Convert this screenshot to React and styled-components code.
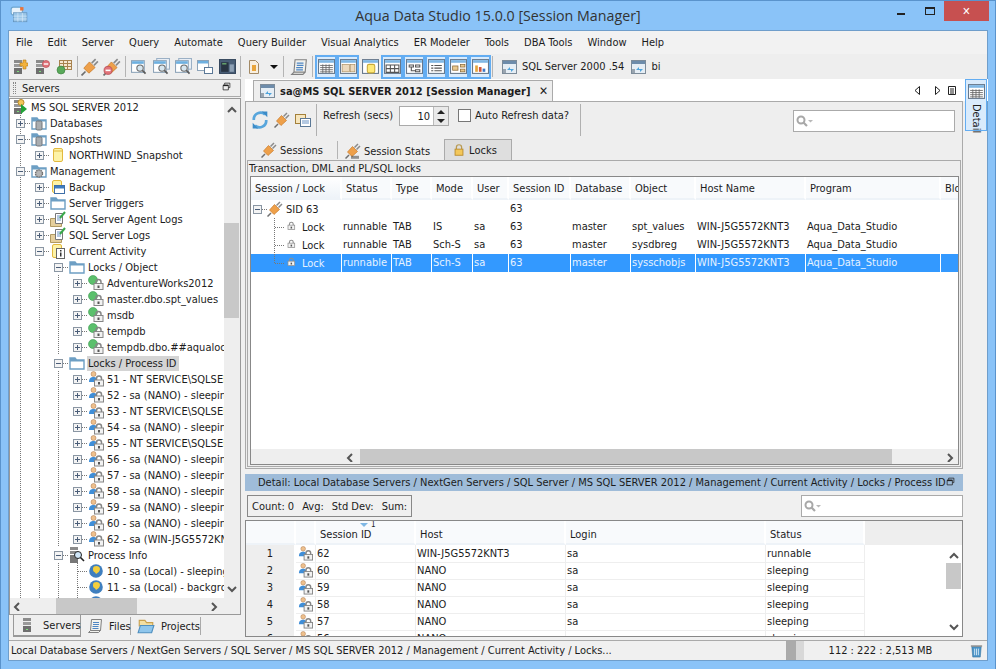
import React from "react";
import styled, { createGlobalStyle } from "styled-components";

const GlobalStyle = createGlobalStyle`
  html, body { margin: 0; padding: 0; background: #8ac3f8; }
  body { font-family: "DejaVu Sans Condensed", "Liberation Sans", sans-serif; font-size: 11px; color: #1c1c1c; }
  * { box-sizing: border-box; }
`;

/* ---------- icons ---------- */

const Svg = ({ size = 16, children }) => (
  <svg width={size} height={size} viewBox="0 0 16 16" style={{ display: "block", flex: "none" }}>
    {children}
  </svg>
);

const ServerBase = () => (
  <>
    <rect x="2" y="1" width="8" height="3" fill="#8b8b8b" />
    <rect x="2" y="5" width="8" height="3" fill="#9a9a9a" />
    <rect x="2" y="9" width="8" height="6" fill="#6f6f6f" />
    <rect x="5" y="12" width="2" height="1" fill="#7ee07e" />
  </>
);

const ServerAdd = () => (
  <Svg>
    <ServerBase />
    <path d="M11 1v3H8v3h3v3h3V7h2V4h-2V1z" fill="#f3b23c" stroke="#b77a16" strokeWidth=".6" />
  </Svg>
);

const ServerRemove = () => (
  <Svg>
    <ServerBase />
    <circle cx="12" cy="5" r="3.6" fill="#e0737a" stroke="#b0444a" strokeWidth=".6" />
    <rect x="9.8" y="4.3" width="4.4" height="1.4" fill="#fff" />
  </Svg>
);

const GridGreen = () => (
  <Svg>
    <rect x="3.5" y="1.5" width="12" height="9" fill="#f6e7cf" stroke="#a8824e" />
    <path d="M3.5 4.5h12M3.5 7.5h12M7.5 1.5v9M11.5 1.5v9" stroke="#a8824e" />
    <circle cx="5" cy="11" r="4" fill="#59a95a" stroke="#3a7d3c" strokeWidth=".6" />
  </Svg>
);

const Plug = ({ badge, size = 18 }) => (
  <Svg size={size}>
    <path d="M0.500 15.500L4 12" stroke="#6f6f6f" strokeWidth="1.500" />
    <path d="M2.500 9L7.500 3.500 12.500 8.500 7 13.500z" fill="#eea04a" stroke="#c97a28" strokeWidth=".7" />
    <path d="M9.500 4.500L13 1M11.500 6.500L15 3" stroke="#8a8a8a" strokeWidth="1.500" />
    {badge === "remove" && (
      <>
        <circle cx="4.500" cy="11" r="3.600" fill="#e0737a" stroke="#b0444a" strokeWidth=".6" />
        <rect x="2.300" y="10.300" width="4.400" height="1.400" fill="#fff" />
      </>
    )}
    {badge === "stats" && <path d="M7 15.800v-3M9 15.800v-3M11 15.800v-3M13 15.800v-3" stroke="#333" strokeWidth="1" />}
  </Svg>
);

const WinSearch = ({ second }) => (
  <Svg size={17}>
    {second && <rect x="3.500" y="0.500" width="12" height="10" fill="#eef3f8" stroke="#9bb0c5" />}
    <rect x="0.500" y="2.500" width="12" height="11" fill="#fff" stroke="#8da3b8" />
    <rect x="1" y="3" width="11" height="2.500" fill="#6eb0e0" />
    <circle cx="8.500" cy="9.500" r="3" fill="#d7e6ef" stroke="#6b6b6b" />
    <path d="M10.700 11.700l3 3" stroke="#5a5a5a" strokeWidth="1.600" />
  </Svg>
);

const WinStack = () => (
  <Svg>
    <rect x="0.500" y="1.500" width="11" height="10" fill="#fff" stroke="#8da3b8" />
    <rect x="1" y="2" width="10" height="2.500" fill="#6eb0e0" />
    <rect x="7.500" y="8.500" width="8" height="6" fill="#fff" stroke="#5b7896" />
  </Svg>
);

const DarkPanel = () => (
  <Svg size={17}>
    <rect x="0.500" y="1.500" width="15" height="13" fill="#4a5f78" stroke="#34465c" />
    <rect x="2" y="4" width="7" height="9" fill="#283442" />
    <rect x="3" y="5" width="4" height="1" fill="#7fd07f" />
    <rect x="10" y="6" width="4" height="7" fill="#8da0b4" />
  </Svg>
);

const Doc = () => (
  <Svg>
    <path d="M3.500 1.500h6l3 3v10h-9z" fill="#f8efe0" stroke="#a38a66" />
    <rect x="6" y="6" width="4" height="6" fill="#e9a53c" />
  </Svg>
);

const Scroll = ({ size = 16 }) => (
  <Svg size={size}>
    <path d="M4.500 1.500h10l-1 11h-10zM3.500 12.500l-2 2h10l2-2" fill="#f2f2ee" stroke="#808080" />
    <path d="M6 4.500h6M6 6.500h6M5.500 8.500h6M5.500 10.500h6" stroke="#4e86c4" />
  </Svg>
);

const ViewWin = ({ kind }) => (
  <Svg size={17}>
    <rect x="0.500" y="1.500" width="15" height="13" fill="#fff" stroke="#66788c" />
    <rect x="1" y="2" width="14" height="2.500" fill="#7fb7e4" />
    {kind === "grid" && (
      <path d="M2 7h12M2 9h12M2 11h12M2 13h12M4.500 6v8M7.500 6v8M10.500 6v8" stroke="#666" strokeWidth=".8" />
    )}
    {kind === "panel" && (
      <>
        <rect x="2" y="6" width="7" height="7" fill="#ecd9bd" stroke="#a88a5c" strokeWidth=".6" />
        <rect x="10" y="6" width="4" height="7" fill="#ecd9bd" stroke="#a88a5c" strokeWidth=".6" />
      </>
    )}
    {kind === "db" && <rect x="5" y="6" width="7" height="8" rx="1.500" fill="#ffe978" stroke="#c8a93a" />}
    {kind === "table" && <path d="M2 6.500h12v7H2zM2 10h12M6 6.500v7M10 6.500v7" fill="none" stroke="#555" />}
    {kind === "flow" && (
      <path d="M3 6.500h4v2H3zM9 6.500h4v2H9zM9 11h4v2H9zM5 8.500V12h4" fill="none" stroke="#555" />
    )}
    {kind === "list" && <path d="M3 7h2M6 7h7M3 9.500h2M6 9.500h7M3 12h2M6 12h7" stroke="#555" />}
    {kind === "tree" && (
      <>
        <rect x="2.500" y="7.500" width="5" height="4" fill="#e9c98f" stroke="#8a6a3a" strokeWidth=".7" />
        <rect x="10" y="6" width="4" height="2.500" fill="#e9c98f" stroke="#8a6a3a" strokeWidth=".7" />
        <rect x="10" y="10.500" width="4" height="2.500" fill="#e9c98f" stroke="#8a6a3a" strokeWidth=".7" />
      </>
    )}
    {kind === "bars" && (
      <>
        <rect x="3" y="7" width="2.500" height="6" fill="#e5a53c" />
        <rect x="6.500" y="8.500" width="2.500" height="4.500" fill="#d0563c" />
        <rect x="10" y="10" width="2.500" height="3" fill="#3c78c8" />
      </>
    )}
  </Svg>
);

const Connection = () => (
  <Svg>
    <rect x="0.500" y="1.500" width="14" height="13" fill="#e6eef5" stroke="#7d8c9a" />
    <rect x="1" y="2" width="13" height="3" fill="#6d8cab" />
    <path d="M5 11l3-3v2h4l-3 3v-2z" fill="#4ea4dc" />
    <rect x="1" y="10" width="3" height="4" fill="#9aa5b0" />
  </Svg>
);

const Restore = () => (
  <Svg size={12}>
    <path d="M3.500 3.500v-2h7v6h-2M1.500 4.500h7v6h-7z" fill="none" stroke="#222" />
    <path d="M1.500 4.500h7" stroke="#222" strokeWidth="2" />
  </Svg>
);

const Padlock = ({ x = 4, y = 6, scale = 1, color = "#868686" }) => (
  <g transform={`translate(${x} ${y}) scale(${scale})`}>
    <path d="M2.500 4V2.500a2.500 2.500 0 0 1 5 0V4" fill="none" stroke={color} strokeWidth="1.500" />
    <rect x="0.500" y="4" width="9" height="6" fill="#f2f2f2" stroke={color} />
    <rect x="4" y="6" width="2" height="2.500" fill="#555" />
  </g>
);

const GrayLock = () => (
  <Svg size={14}>
    <Padlock x={3} y={2.500} scale={0.85} color="#8f8f8f" />
  </Svg>
);

const GoldLock = () => (
  <Svg size={14}>
    <path d="M5 7V5a3 3 0 0 1 6 0v2" fill="none" stroke="#b89a52" strokeWidth="1.400" />
    <rect x="3.500" y="7" width="9" height="7" fill="#f3c75a" stroke="#b8892a" />
  </Svg>
);

const GreenLock = () => (
  <Svg>
    <circle cx="5" cy="5" r="4.500" fill="#5bc06c" stroke="#3c9a50" strokeWidth=".6" />
    <Padlock x={5.500} y={4.500} />
  </Svg>
);

const UserLock = ({ size = 16 }) => (
  <Svg size={size}>
    <circle cx="5.500" cy="3" r="2.500" fill="#eec08d" stroke="#a8744a" strokeWidth=".5" />
    <path d="M1 11c0-4 2-5 4.500-5S9 7 9 11z" fill="#3f8ed8" />
    <Padlock x={6} y={5} />
  </Svg>
);

const FolderBase = ({ children }) => (
  <Svg>
    <path d="M1 3h5l1.500 2H15v9H1z" fill="#fff" stroke="#6d9fc4" strokeWidth="1.400" />
    <path d="M1 3h5l1.500 2H15v1.500H1z" fill="#6d9fc4" />
    {children}
  </Svg>
);

const FolderDb = () => (
  <FolderBase>
    <rect x="5" y="6" width="6" height="9" rx="1.500" fill="#a9adb0" stroke="#70757a" />
  </FolderBase>
);

const FolderGear = () => (
  <FolderBase>
    <circle cx="8" cy="10.500" r="3.500" fill="#b6b6b6" stroke="#707070" strokeWidth="1.400" strokeDasharray="1.500 .7" />
  </FolderBase>
);

const FolderOpen = () => (
  <Svg size={18}>
    <path d="M2 3h5l1.500 2H14v3H2z" fill="#f3dfa2" stroke="#c9a14e" />
    <path d="M1 14L3 7.500h12L13 14z" fill="#8fc6ec" stroke="#4f8fbf" />
  </Svg>
);

const YellowDb = () => (
  <Svg>
    <rect x="3.500" y="1.500" width="9" height="13" rx="1.500" fill="#fdf3a8" stroke="#e2b93e" />
    <path d="M4 4h8" stroke="#e2b93e" />
  </Svg>
);

const Backup = () => (
  <Svg>
    <rect x="2.500" y="1.500" width="9" height="12" rx="1.500" fill="#fdf3a8" stroke="#e2b93e" />
    <rect x="4.500" y="6.500" width="10" height="8" fill="#fff" stroke="#3e6fa8" />
    <rect x="5" y="7" width="9" height="2.500" fill="#3e7cc0" />
  </Svg>
);

const LogNote = () => (
  <Svg>
    <path d="M0.500 7.500h11v8h-11z" fill="#e5cf9c" stroke="#b19a62" />
    <path d="M5.500 2.500h7v10h-7z" fill="#fff" stroke="#777" />
    <path d="M7 5h4M7 7h4M7 9h4" stroke="#6b93c4" />
    <path d="M10 7l5-6" stroke="#3aa84a" strokeWidth="2" />
  </Svg>
);

const Activity = () => (
  <Svg>
    <rect x="2.500" y="1.500" width="9" height="13" rx="1.500" fill="#fdf3a8" stroke="#e2b93e" />
    <rect x="6.500" y="5.500" width="8" height="10" fill="#fff" stroke="#666" />
    <rect x="10" y="7" width="1.500" height="1.500" fill="#333" />
    <rect x="10" y="9.500" width="1.500" height="4" fill="#333" />
  </Svg>
);

const ProcessInfo = () => (
  <Svg>
    <rect x="1" y="0" width="8" height="3" fill="#8b8b8b" />
    <rect x="1" y="4" width="8" height="3" fill="#8b8b8b" />
    <rect x="1" y="8" width="8" height="8" fill="#777" />
    <circle cx="9" cy="8" r="3.500" fill="#cfe5f7" stroke="#222" />
    <path d="M11.500 10.500l3.500 3.500" stroke="#222" strokeWidth="1.600" />
  </Svg>
);

const Globe = () => (
  <Svg>
    <circle cx="8" cy="8" r="6.800" fill="#3f7fbf" />
    <path d="M6 3.500c3-1.500 6 0 6 2.500 0 2-2 4-4 5-.500-2-3-2-3-4 0-1.500 0-2.500 1-3.500z" fill="#f4cf3c" />
  </Svg>
);

const ServerRoot = () => (
  <Svg>
    <ServerBase />
    <circle cx="9" cy="3.500" r="3" fill="#f3c75a" stroke="#b8892a" />
    <path d="M9 5v10l6-5z" fill="#22a338" />
  </Svg>
);

const Refresh = () => (
  <Svg size={18}>
    <path d="M12.500 3A6 6 0 0 0 2.500 8M3.500 13A6 6 0 0 0 13.500 8" fill="none" stroke="#58a6dc" strokeWidth="2.400" />
    <path d="M9.500 0.500h5v5zM6.500 15.500h-5v-5z" fill="#3c8cc8" />
  </Svg>
);

const Copy = () => (
  <Svg>
    <rect x="0.500" y="2.500" width="10" height="9" fill="#f7e6bd" stroke="#a3803a" />
    <rect x="5.500" y="6.500" width="10" height="8" fill="#fff" stroke="#5b7896" />
    <path d="M7 9h7M7 11h7" stroke="#6b93c4" />
  </Svg>
);

const Trash = () => (
  <Svg size={15}>
    <path d="M3 4h10l-1 11H4z" fill="#4e95c8" stroke="#2e6e9c" strokeWidth=".6" />
    <rect x="2" y="2.500" width="12" height="1.500" fill="#888" />
    <path d="M6 6v7M8 6v7M10 6v7" stroke="#cfe6f5" />
  </Svg>
);

const Magnifier = () => (
  <svg width="18" height="12" viewBox="0 0 18 12" style={{ display: "block" }}>
    <circle cx="5" cy="5" r="3.500" fill="none" stroke="#a8a8a8" strokeWidth="2" />
    <path d="M7.500 7.500L11 11" stroke="#a8a8a8" strokeWidth="2.200" />
    <path d="M12 5h5l-2.500 2.500z" fill="#b8b8b8" />
  </svg>
);

const Chevron = ({ dir }) => {
  const d = { up: "M1 6l4-4 4 4", down: "M1 2l4 4 4-4", left: "M6 1L2 5l4 4", right: "M2 1l4 4-4 4" }[dir];
  return (
    <svg width="10" height="10" viewBox="0 0 10 8" style={{ display: "block", flex: "none" }}>
      <path d={d} fill="none" stroke="#555" strokeWidth="2" />
    </svg>
  );
};

/* ---------- window frame ---------- */

const Page = styled.div`
  width: 996px;
  height: 669px;
  background: #8ac3f8;
  border: 1px solid #5a93cc;
  border-bottom: 0;
  overflow: hidden;
  display: flex;
  flex-direction: column;
`;

const TitleBar = styled.header`
  height: 29px;
  flex: none;
  display: grid;
  grid-template-columns: 1fr auto 1fr;
  align-items: start;
`;

const AppLogo = styled.div`
  padding: 5px 0 0 9px;
`;

const TitleText = styled.div`
  font-family: "Open Sans", "Noto Sans", sans-serif;
  font-size: 14.250px;
  line-height: 29px;
  color: #333;
`;

const WinControls = styled.div`
  display: flex;
  justify-content: flex-end;
  padding-right: 6px;
`;

const WinButton = styled.div`
  width: ${(p) => (p.$close ? 45 : 29)}px;
  height: 20px;
  display: flex;
  align-items: center;
  justify-content: center;
  background: ${(p) => (p.$close ? "#c75050" : "transparent")};
  color: #fff;
`;

const MinBar = styled.span`
  width: 8px;
  height: 2px;
  margin-top: 6px;
  background: #222;
`;

const MaxBox = styled.span`
  width: 10px;
  height: 8px;
  border: 1px solid #222;
  border-top-width: 2px;
`;

const Shell = styled.div`
  margin: 0 7px 0 7px;
  height: 631px;
  flex: none;
  border: 1px solid #6f9ecb;
  background: #f0f0f0;
  display: flex;
  flex-direction: column;
`;

/* ---------- menu and toolbar ---------- */

const MenuBar = styled.nav`
  height: 23px;
  flex: none;
  display: flex;
  align-items: center;
  padding-left: 7px;
  gap: 15px;
  background: #f2f2f2;
`;

const ToolBar = styled.div`
  height: 25px;
  flex: none;
  display: flex;
  align-items: center;
  background: #eeeeee;
`;

const ToolButton = styled.div`
  width: 22px;
  height: 24px;
  flex: none;
  display: flex;
  align-items: center;
  justify-content: center;
  ${(p) => p.$on && "background: #d9ebfc; border: 2px solid #63adf2;"}
`;

const ToolSep = styled.span`
  width: 1px;
  height: 21px;
  flex: none;
  background: #b4b4b4;
  margin: 0 ${(p) => p.$r ?? 1}px 0 ${(p) => p.$l ?? 2}px;
`;

const Caret = styled.span`
  width: 0;
  height: 0;
  margin: 0 5px 0 5px;
  border-left: 4px solid transparent;
  border-right: 4px solid transparent;
  border-top: 4px solid #111;
`;

const ConnLabel = styled.span`
  margin: 0 7px 0 4px;
  white-space: nowrap;
`;

/* ---------- main layout ---------- */

const Main = styled.main`
  height: 561px;
  flex: none;
  display: flex;
`;

const LeftColumn = styled.section`
  width: 232px;
  flex: none;
  display: flex;
  flex-direction: column;
`;

const ServersHead = styled.div`
  height: 18px;
  flex: none;
  margin-bottom: 1px;
  border: 1px solid #aaa;
  display: flex;
  align-items: center;
  padding: 0 6px 0 3px;
  background: #eee;
`;

const Grip = styled.span`
  width: 3px;
  height: 12px;
  margin-right: 6px;
  border-left: 1px dotted #888;
  border-right: 1px dotted #888;
`;

const HeadLabel = styled.span`
  flex: 1;
`;

const TreeBox = styled.div`
  height: 517px;
  flex: none;
  border: 1px solid #999;
  display: flex;
  flex-direction: column;
`;

const TreeTop = styled.div`
  height: 499px;
  flex: none;
  display: flex;
`;

const TreeList = styled.div`
  width: 214px;
  flex: none;
  background: #fff;
  overflow: hidden;
`;

const TreeRow = styled.div`
  height: 16px;
  display: flex;
  align-items: center;
  white-space: nowrap;
  padding-left: ${(p) => p.$pad}px;
`;

const RootLabel = styled.span`
  line-height: 15px;
  margin-left: 2px;
  padding: 0 2px 0 1px;
`;

const Guide = styled.span`
  width: 19px;
  height: 16px;
  flex: none;
  background: ${(p) =>
    p.$on
      ? "repeating-linear-gradient(to bottom, #777 0 1px, transparent 1px 2px) 9px 0 / 1px 100% no-repeat"
      : "none"};
`;

const ExpanderCell = styled.span`
  width: 19px;
  height: 16px;
  flex: none;
  position: relative;
  display: flex;
  align-items: center;
  background: repeating-linear-gradient(to right, #777 0 1px, transparent 1px 2px) 10px 8px / 10px 1px no-repeat
    ${(p) =>
      p.$line
        ? ", repeating-linear-gradient(to bottom, #777 0 1px, transparent 1px 2px) 9px 0 / 1px 100% no-repeat"
        : ""};
`;

const Expander = styled.span`
  width: 9px;
  height: 9px;
  flex: none;
  margin-left: ${(p) => p.$ml ?? 5}px;
  border: 1px solid #8a96a3;
  background: #f4f4f4 linear-gradient(#4a5d78, #4a5d78) center / 5px 1px no-repeat;
  position: relative;
  &::after {
    content: "";
    display: ${(p) => (p.$open ? "none" : "block")};
    position: absolute;
    left: 3px;
    top: 1px;
    width: 1px;
    height: 5px;
    background: #4a5d78;
  }
`;

const TreeIcon = styled.span`
  width: 19px;
  height: 16px;
  flex: none;
  display: flex;
  align-items: center;
  padding-left: 1px;
`;

const TreeText = styled.span`
  line-height: 15px;
  padding: 0 2px 0 1px;
  ${(p) => p.$selected && "background: #d4d4d4;"}
`;

const VScroll = styled.div`
  width: 16px;
  flex: none;
  background: #eee;
  display: flex;
  flex-direction: column;
  align-items: center;
  justify-content: space-between;
  padding: 6px 0 4px;
  position: relative;
`;

const VThumb = styled.div`
  position: absolute;
  left: 0;
  right: 1px;
  top: ${(p) => p.$top}px;
  height: ${(p) => p.$h}px;
  background: #c8c8c8;
`;

const HScroll = styled.div`
  height: ${(p) => p.$h ?? 16}px;
  flex: none;
  background: #eee;
  display: flex;
  align-items: center;
  padding-left: ${(p) => p.$pad ?? 0}px;
`;

const HThumb = styled.div`
  width: ${(p) => p.$w}px;
  height: 100%;
  margin: 0 ${(p) => p.$mr}px 0 ${(p) => p.$ml}px;
  background: #c8c8c8;
  flex: none;
`;

const BottomTabs = styled.div`
  height: 25px;
  flex: none;
  display: flex;
  align-items: flex-start;
  padding-left: 4px;
`;

const BottomTab = styled.div`
  height: 22px;
  flex: none;
  display: flex;
  align-items: center;
  gap: 6px;
  padding: 0 3px 0 ${(p) => (p.$active ? 7 : 6)}px;
  width: ${(p) => p.$w}px;
  white-space: nowrap;
  ${(p) =>
    p.$active
      ? "border: 1px solid #999; border-top: 0; border-bottom-width: 2px; background: #eee;"
      : "border-right: 1px solid #aaa; margin-top: 2px; height: 18px;"}
`;

const RightColumn = styled.section`
  width: 718px;
  margin-left: 4px;
  flex: none;
  display: flex;
  flex-direction: column;
`;

const SideRail = styled.aside`
  flex: 1;
  padding: 0 1px 0 2px;
  background: linear-gradient(#fff, #fff) top / 100% 22px no-repeat;
`;

const DetailTab = styled.div`
  width: 22px;
  height: 52px;
  border: 1px solid #63adf2;
  background: #d9ebfc;
  display: flex;
  flex-direction: column;
  align-items: center;
  padding-top: 3px;
  gap: 4px;
`;

const DetailLabel = styled.span`
  writing-mode: vertical-rl;
  line-height: 12px;
`;

/* ---------- session manager ---------- */

const TabStrip = styled.div`
  height: 22px;
  flex: none;
  background: #fff;
  display: flex;
  align-items: flex-end;
  padding-left: 8px;
`;

const DocTab = styled.div`
  width: 300px;
  height: 21px;
  border: 1px solid #aaa;
  border-bottom: 0;
  background: #eee;
  display: flex;
  align-items: center;
  padding: 0 4px 0 6px;
  gap: 4px;
  font-weight: 700;
  white-space: nowrap;
`;

const DocTitle = styled.span`
  flex: 1;
`;

const CloseMark = styled.span`
  font-size: 12px;
  font-weight: 700;
  line-height: 1;
`;

const TabNav = styled.div`
  margin-left: auto;
  height: 21px;
  padding-right: 7px;
  display: flex;
  align-items: center;
  gap: 8px;
`;

const SessionPanel = styled.div`
  height: 368px;
  flex: none;
  border: 1px solid #aaa;
  background: #eee;
  display: flex;
  flex-direction: column;
`;

const ToolRow = styled.div`
  height: 37px;
  flex: none;
  display: flex;
  align-items: flex-start;
  padding: 1px 7px 0 5px;
`;

const ActionIcons = styled.div`
  height: 34px;
  display: flex;
  align-items: center;
  gap: 5px;
`;

const RowSep = styled.span`
  width: 1px;
  height: 32px;
  flex: none;
  background: #b0b0b0;
  margin: 1px ${(p) => p.$r}px 0 ${(p) => p.$l}px;
`;

const RowLabel = styled.span`
  line-height: 26px;
  white-space: nowrap;
`;

const Spinner = styled.div`
  width: 50px;
  height: 20px;
  margin: 3px 0 0 6px;
  border: 1px solid #aaa;
  background: #fff;
  display: flex;
  align-items: center;
  justify-content: flex-end;
`;

const SpinValue = styled.span`
  padding-right: 3px;
`;

const SpinButtons = styled.div`
  width: 15px;
  height: 100%;
  background: #e9e9e9;
  border-left: 1px solid #bbb;
  display: flex;
  flex-direction: column;
  align-items: center;
  justify-content: space-around;
`;

const SpinArrow = styled.span`
  width: 0;
  height: 0;
  border-left: 4px solid transparent;
  border-right: 4px solid transparent;
  ${(p) => (p.$up ? "border-bottom: 4px solid #222;" : "border-top: 4px solid #222;")}
`;

const CheckBox = styled.span`
  width: 13px;
  height: 13px;
  margin: 6px 4px 0 9px;
  border: 1px solid #777;
  background: #fff;
  flex: none;
`;

const SearchBox = styled.div`
  width: ${(p) => p.$w}px;
  height: ${(p) => p.$h}px;
  margin-top: ${(p) => p.$top ?? 0}px;
  margin-left: auto;
  border: 1px solid #aaa;
  background: #fff;
  display: flex;
  align-items: center;
  padding-left: 2px;
  flex: none;
`;

const SubTabs = styled.div`
  height: 21px;
  flex: none;
  display: flex;
  align-items: flex-end;
  padding-left: 14px;
`;

const SubTab = styled.div`
  display: flex;
  align-items: center;
  gap: 3px;
  height: ${(p) => (p.$active ? 21 : 18)}px;
  padding: 0 14px 0 ${(p) => (p.$active ? 7 : 1)}px;
  margin-left: ${(p) => p.$ml ?? 0}px;
  ${(p) => p.$active && "background: #dedede; border: 1px solid #aaa; border-bottom: 0;"}
  ${(p) => p.$sep && "border-right: 1px solid #b4b4b4; margin-bottom: 1px;"}
`;

const LockFrame = styled.div`
  height: 307px;
  flex: none;
  margin: 0 1px;
  border: 1px solid #aaa;
  display: flex;
  flex-direction: column;
`;

const FrameCaption = styled.div`
  height: 15px;
  flex: none;
  line-height: 15px;
  padding-left: 1px;
`;

const TableBox = styled.div`
  flex: 1;
  margin: 0 1px 1px 2px;
  border: 1px solid #888;
  background: #fff;
  display: flex;
  flex-direction: column;
  overflow: hidden;
`;

const GridRow = styled.div`
  display: grid;
  grid-template-columns: ${(p) => p.$cols};
  flex: none;
  height: ${(p) => p.$h}px;
  ${(p) => p.$selected && "background: #3399ff; color: #e6f2ff;"}
`;

const HeadCell = styled.div`
  background: ${(p) => (p.$first ? "linear-gradient(#fff, #eef3f8)" : "#f8fafc")};
  border-right: 2px solid #fff;
  border-bottom: 2px solid #eef3f8;
  padding-left: 4px;
  line-height: ${(p) => p.$lh ?? 24}px;
  white-space: nowrap;
  overflow: hidden;
  position: relative;
`;

const DataCell = styled.div`
  padding-left: 1px;
  line-height: 18px;
  white-space: nowrap;
  overflow: hidden;
  ${(p) => p.$selected && "border-right: 1px solid #fff;"}
`;

const SessionCell = styled.div`
  display: flex;
  align-items: center;
  padding-left: ${(p) => p.$pad}px;
  ${(p) => p.$selected && "border-right: 1px solid #fff;"}
`;

const LockConnector = styled.span`
  width: 10px;
  height: 100%;
  flex: none;
  margin-right: 1px;
  background: repeating-linear-gradient(to right, #777 0 1px, transparent 1px 2px) 1px 9px / 9px 1px no-repeat,
    repeating-linear-gradient(to bottom, #777 0 1px, transparent 1px 2px) 0 0 / 1px ${(p) => (p.$last ? "9px" : "100%")} no-repeat;
`;

const SidDots = styled.span`
  width: 5px;
  height: 1px;
  flex: none;
  background: repeating-linear-gradient(to right, #777 0 1px, transparent 1px 2px);
`;

const CellLabel = styled.span`
  margin-left: 3px;
`;

const Filler = styled.div`
  flex: 1;
`;

const Splitter = styled.div`
  height: 5px;
  flex: none;
`;

const DetailHead = styled.div`
  height: 17px;
  flex: none;
  background: #9fbcd9;
  display: flex;
  align-items: center;
  padding: 0 12px 0 13px;
  white-space: nowrap;
`;

const StatRow = styled.div`
  height: 29px;
  flex: none;
  display: flex;
  align-items: center;
  padding: 1px 0 0 2px;
`;

const StatBox = styled.div`
  width: 165px;
  height: 22px;
  border: 1px solid #888;
  display: flex;
  align-items: center;
  gap: 8px;
  padding-left: 4px;
  white-space: nowrap;
`;

const DetailTable = styled.div`
  height: 117px;
  flex: none;
  border: 1px solid #888;
  display: flex;
  background: #fff linear-gradient(#eee, #eee) top / 100% 24px no-repeat;
  overflow: hidden;
`;

const DetailBody = styled.div`
  flex: 1;
  min-width: 0;
  display: flex;
  flex-direction: column;
`;

const NumCell = styled.div`
  background: #eee;
  border-right: 2px solid #fff;
  text-align: center;
  line-height: 18px;
`;

const IconCell = styled.div`
  border-right: 1px solid #eee;
  border-bottom: 1px solid #eee;
  display: flex;
  align-items: center;
  justify-content: center;
`;

const DetailCell = styled.div`
  border-right: 1px solid #eee;
  border-bottom: 1px solid #eee;
  padding-left: 1px;
  line-height: 17px;
  white-space: nowrap;
  overflow: hidden;
`;

const SortMark = styled.span`
  position: absolute;
  left: 44px;
  top: 0;
  display: flex;
  align-items: center;
  gap: 3px;
  font-size: 8px;
  line-height: 7px;
`;

const SortArrow = styled.span`
  width: 0;
  height: 0;
  border-left: 4px solid transparent;
  border-right: 4px solid transparent;
  border-top: 4px solid #7fb7e4;
`;

const DetailScroll = styled.div`
  width: 16px;
  flex: none;
  margin-top: 24px;
  position: relative;
  background: #fff;
  display: flex;
  flex-direction: column;
  align-items: center;
  justify-content: space-between;
  padding: 6px 0 4px;
`;

const StatusBar = styled.footer`
  height: 20px;
  flex: none;
  display: flex;
  align-items: center;
  border-top: 1px solid #aaa;
  padding-left: 2px;
  white-space: nowrap;
`;

const StatusPath = styled.span`
  flex: 1;
`;

const MemoryBox = styled.div`
  width: 201px;
  height: 100%;
  border-left: 1px solid #aaa;
  display: flex;
  align-items: center;
`;

const MemUsed = styled.span`
  width: 9px;
  height: 100%;
  background: #ababab;
`;

const MemAlloc = styled.span`
  width: 8px;
  height: 100%;
  background: #d8d8d8;
`;

const MemText = styled.span`
  flex: 1;
  text-align: center;
  padding-right: 12px;
`;

const TrashSlot = styled.span`
  width: 18px;
  flex: none;
`;

/* ---------- data ---------- */

const MENU = ["File", "Edit", "Server", "Query", "Automate", "Query Builder", "Visual Analytics", "ER Modeler", "Tools", "DBA Tools", "Window", "Help"];

const nt = (n) => `${n} - NT SERVICE\\SQLSERVERAGENT`;
const sa = (n) => `${n} - sa (NANO) - sleeping`;

// level, icon, expander (+, -, or none), label, which guide columns are drawn, selected
const TREE = [
  [1, FolderDb, "+", "Databases", []],
  [1, FolderDb, "-", "Snapshots", []],
  [2, YellowDb, "+", "NORTHWIND_Snapshot", [1]],
  [1, FolderGear, "-", "Management", []],
  [2, Backup, "+", "Backup", [1]],
  [2, FolderBase, "+", "Server Triggers", [1]],
  [2, LogNote, "+", "SQL Server Agent Logs", [1]],
  [2, LogNote, "+", "SQL Server Logs", [1]],
  [2, Activity, "-", "Current Activity", [1]],
  [3, FolderBase, "-", "Locks / Object", [1, 2]],
  [4, GreenLock, "+", "AdventureWorks2012", [1, 2, 3]],
  [4, GreenLock, "+", "master.dbo.spt_values", [1, 2, 3]],
  [4, GreenLock, "+", "msdb", [1, 2, 3]],
  [4, GreenLock, "+", "tempdb", [1, 2, 3]],
  [4, GreenLock, "+", "tempdb.dbo.##aqualock_table", [1, 2, 3]],
  [3, FolderBase, "-", "Locks / Process ID", [1, 2], true],
  [4, UserLock, "+", nt(51), [1, 2, 3]],
  [4, UserLock, "+", sa(52), [1, 2, 3]],
  [4, UserLock, "+", nt(53), [1, 2, 3]],
  [4, UserLock, "+", sa(54), [1, 2, 3]],
  [4, UserLock, "+", nt(55), [1, 2, 3]],
  [4, UserLock, "+", sa(56), [1, 2, 3]],
  [4, UserLock, "+", sa(57), [1, 2, 3]],
  [4, UserLock, "+", sa(58), [1, 2, 3]],
  [4, UserLock, "+", sa(59), [1, 2, 3]],
  [4, UserLock, "+", sa(60), [1, 2, 3]],
  [4, UserLock, "+", "62 - sa (WIN-J5G5572KNT3)", [1, 2, 3]],
  [3, ProcessInfo, "-", "Process Info", [1, 2]],
  [4, Globe, "", "10 - sa (Local) - sleeping", [1, 2, 3]],
  [4, Globe, "", "11 - sa (Local) - background", [1, 2, 3]],
  [4, Globe, "", "", [1, 2, 3]],
];

const TOP_COLS = "91px 50px 40px 41px 36px 62px 60px 65px 110px 135px 19px";
const TOP_HEAD = ["Session / Lock", "Status", "Type", "Mode", "User", "Session ID", "Database", "Object", "Host Name", "Program", "Blocked"];
const TOP_ROWS = [
  ["runnable", "TAB", "IS", "sa", "63", "master", "spt_values"],
  ["runnable", "TAB", "Sch-S", "sa", "63", "master", "sysdbreg"],
  ["runnable", "TAB", "Sch-S", "sa", "63", "master", "sysschobjs"],
];

const DETAIL_COLS = "50px 20px 100px 150px 200px 99px 1fr";
const DETAIL_ROWS = [
  [1, "62", "WIN-J5G5572KNT3", "runnable"],
  [2, "60", "NANO", "sleeping"],
  [3, "59", "NANO", "sleeping"],
  [4, "58", "NANO", "sleeping"],
  [5, "57", "NANO", "sleeping"],
  [6, "56", "NANO", "sleeping"],
];

const DETAIL_PATH =
  "Detail: Local Database Servers / NextGen Servers / SQL Server / MS SQL SERVER 2012 / Management / Current Activity / Locks / Process ID";

/* ---------- parts ---------- */

function Toolbar() {
  return (
    <ToolBar>
      <ToolButton><ServerAdd /></ToolButton>
      <ToolButton><ServerRemove /></ToolButton>
      <ToolButton><GridGreen /></ToolButton>
      <ToolSep />
      <ToolButton><Plug /></ToolButton>
      <ToolButton><Plug badge="remove" /></ToolButton>
      <ToolSep $r={2} />
      <ToolButton><WinSearch /></ToolButton>
      <ToolButton><WinSearch second /></ToolButton>
      <ToolButton><WinSearch second /></ToolButton>
      <ToolButton><WinStack /></ToolButton>
      <ToolButton><DarkPanel /></ToolButton>
      <ToolSep $r={2} />
      <ToolButton><Doc /></ToolButton>
      <Caret />
      <ToolSep $l={0} $r={4} />
      <ToolButton><Scroll size={18} /></ToolButton>
      <ToolSep $l={2} $r={2} />
      <ToolButton $on><ViewWin kind="grid" /></ToolButton>
      <ToolButton $on><ViewWin kind="panel" /></ToolButton>
      <ToolButton><ViewWin kind="db" /></ToolButton>
      <ToolButton $on><ViewWin kind="table" /></ToolButton>
      <ToolButton $on><ViewWin kind="flow" /></ToolButton>
      <ToolButton $on><ViewWin kind="list" /></ToolButton>
      <ToolButton $on><ViewWin kind="tree" /></ToolButton>
      <ToolButton $on><ViewWin kind="bars" /></ToolButton>
      <ToolSep $l={1} $r={9} />
      <Connection />
      <ConnLabel>SQL Server 2000 .54</ConnLabel>
      <Connection />
      <ConnLabel>bi</ConnLabel>
    </ToolBar>
  );
}

function ServerTree() {
  return (
    <TreeList>
      <TreeRow $pad={2}>
        <ServerRoot />
        <RootLabel>MS SQL SERVER 2012</RootLabel>
      </TreeRow>
      {TREE.map(([level, Icon, exp, label, guides, selected], i) => (
        <TreeRow $pad={1} key={i}>
          {Array.from({ length: level - 1 }, (_, g) => (
            <Guide key={g} $on={guides.includes(g + 1)} />
          ))}
          <ExpanderCell $line={level === 1 || exp === ""}>
            {exp && <Expander $open={exp === "-"} />}
          </ExpanderCell>
          <TreeIcon>
            <Icon />
          </TreeIcon>
          <TreeText $selected={selected}>{label}</TreeText>
        </TreeRow>
      ))}
    </TreeList>
  );
}

function ServerBaseIcon() {
  return (
    <Svg>
      <ServerBase />
    </Svg>
  );
}

function LeftPane() {
  return (
    <LeftColumn>
      <ServersHead>
        <Grip />
        <HeadLabel>Servers</HeadLabel>
        <Restore />
      </ServersHead>
      <TreeBox>
        <TreeTop>
          <ServerTree />
          <VScroll>
            <VThumb $top={124} $h={95} />
            <Chevron dir="up" />
            <Chevron dir="down" />
          </VScroll>
        </TreeTop>
        <HScroll $pad={3}>
          <Chevron dir="left" />
          <HThumb $ml={33} $w={81} $mr={73} />
          <Chevron dir="right" />
        </HScroll>
      </TreeBox>
      <BottomTabs>
        <BottomTab $active $w={68}>
          <ServerBaseIcon />
          Servers
        </BottomTab>
        <BottomTab $w={50}>
          <Scroll />
          Files
        </BottomTab>
        <BottomTab $w={70}>
          <FolderOpen />
          Projects
        </BottomTab>
      </BottomTabs>
    </LeftColumn>
  );
}

function LocksTable() {
  return (
    <TableBox>
      <GridRow $cols={TOP_COLS} $h={23}>
        {TOP_HEAD.map((h, i) => (
          <HeadCell key={h} $first={i === 0}>{h}</HeadCell>
        ))}
      </GridRow>
      <GridRow $cols={TOP_COLS} $h={18}>
        <SessionCell $pad={2}>
          <Expander $open $ml={0} />
          <SidDots />
          <Plug size={16} />
          <CellLabel>SID 63</CellLabel>
        </SessionCell>
        <span /><span /><span /><span />
        <DataCell>63</DataCell>
      </GridRow>
      {TOP_ROWS.map((row, r) => {
        const selected = r === 2;
        return (
          <GridRow $cols={TOP_COLS} $h={18} $selected={selected} key={r}>
            <SessionCell $pad={23} $selected={selected}>
              <LockConnector $last={selected} />
              <GrayLock />
              <CellLabel>Lock</CellLabel>
            </SessionCell>
            {row.map((v, i) => (
              <DataCell key={i} $selected={selected}>{v}</DataCell>
            ))}
            <DataCell $selected={selected}>WIN-J5G5572KNT3</DataCell>
            <DataCell $selected={selected}>Aqua_Data_Studio</DataCell>
            <DataCell />
          </GridRow>
        );
      })}
      <Filler />
      <HScroll $h={15} $pad={95}>
        <Chevron dir="left" />
        <HThumb $ml={4} $w={532} $mr={54} />
        <Chevron dir="right" />
      </HScroll>
    </TableBox>
  );
}

function DetailGrid() {
  return (
    <DetailTable>
      <DetailBody>
        <GridRow $cols={DETAIL_COLS} $h={24}>
          <HeadCell $lh={27} />
          <HeadCell $lh={27} />
          <HeadCell $lh={27}>
            <SortMark>
              <SortArrow />1
            </SortMark>
            Session ID
          </HeadCell>
          <HeadCell $lh={27}>Host</HeadCell>
          <HeadCell $lh={27}>Login</HeadCell>
          <HeadCell $lh={27}>Status</HeadCell>
        </GridRow>
        {DETAIL_ROWS.map(([n, id, host, status]) => (
          <GridRow $cols={DETAIL_COLS} $h={17} key={n}>
            <NumCell>{n}</NumCell>
            <IconCell><UserLock size={15} /></IconCell>
            <DetailCell>{id}</DetailCell>
            <DetailCell>{host}</DetailCell>
            <DetailCell>sa</DetailCell>
            <DetailCell>{status}</DetailCell>
          </GridRow>
        ))}
      </DetailBody>
      <DetailScroll>
        <VThumb $top={18} $h={26} />
        <Chevron dir="up" />
        <Chevron dir="down" />
      </DetailScroll>
    </DetailTable>
  );
}

function RightPane() {
  return (
    <RightColumn>
      <TabStrip>
        <DocTab>
          <Connection />
          <DocTitle>sa@MS SQL SERVER 2012 [Session Manager]</DocTitle>
          <CloseMark>✕</CloseMark>
        </DocTab>
        <TabNav>
          <svg width="42" height="10" viewBox="0 0 42 10">
            <path d="M5.500.5v8L1 4.500zM21.500.500v8l4.500-4z" fill="none" stroke="#222" />
            <path d="M34.500.5h7v8h-7zM36 3h4M36 5h4M36 7h4" fill="none" stroke="#222" />
          </svg>
        </TabNav>
      </TabStrip>
      <SessionPanel>
        <ToolRow>
          <ActionIcons>
            <Refresh />
            <Plug size={16} />
            <Copy />
          </ActionIcons>
          <RowSep $l={5} $r={6} />
          <RowLabel>Refresh (secs)</RowLabel>
          <Spinner>
            <SpinValue>10</SpinValue>
            <SpinButtons>
              <SpinArrow $up />
              <SpinArrow />
            </SpinButtons>
          </Spinner>
          <CheckBox />
          <RowLabel>Auto Refresh data?</RowLabel>
          <RowSep $l={11} $r={0} />
          <SearchBox $w={162} $h={22} $top={7}>
            <Magnifier />
          </SearchBox>
        </ToolRow>
        <SubTabs>
          <SubTab $sep><Plug size={16} /> Sessions</SubTab>
          <SubTab $ml={6}><Plug size={16} badge="stats" /> Session Stats</SubTab>
          <SubTab $active><GoldLock /> Locks</SubTab>
        </SubTabs>
        <LockFrame>
          <FrameCaption>Transaction, DML and PL/SQL locks</FrameCaption>
          <LocksTable />
        </LockFrame>
      </SessionPanel>
      <Splitter />
      <DetailHead>
        <HeadLabel>{DETAIL_PATH}</HeadLabel>
        <Restore />
      </DetailHead>
      <StatRow>
        <StatBox>
          <span>Count: 0</span>
          <span>Avg:</span>
          <span>Std Dev:</span>
          <span>Sum:</span>
        </StatBox>
        <SearchBox $w={162} $h={22}>
          <Magnifier />
        </SearchBox>
      </StatRow>
      <DetailGrid />
    </RightColumn>
  );
}

export default function App() {
  return (
    <>
      <GlobalStyle />
      <Page>
        <TitleBar>
          <AppLogo>
            <Svg size={18}>
              <rect x="1" y="1" width="10" height="7" rx="2" fill="#e9f3fb" stroke="#6fa6d0" />
              <rect x="3" y="6" width="12" height="8" fill="#9cc7e8" stroke="#5f8fb8" strokeWidth=".6" />
              <path d="M3 9h12M3 11.500h12M7 6v8M11 6v8" stroke="#d8ecfa" strokeWidth=".6" />
              <path d="M9 1h3v3h-3z" fill="#e8743c" />
            </Svg>
          </AppLogo>
          <TitleText>Aqua Data Studio 15.0.0 [Session Manager]</TitleText>
          <WinControls>
            <WinButton><MinBar /></WinButton>
            <WinButton><MaxBox /></WinButton>
            <WinButton $close>✕</WinButton>
          </WinControls>
        </TitleBar>
        <Shell>
          <MenuBar>
            {MENU.map((m) => (
              <span key={m}>{m}</span>
            ))}
          </MenuBar>
          <Toolbar />
          <Main>
            <LeftPane />
            <RightPane />
            <SideRail>
              <DetailTab>
                <ViewWin kind="grid" />
                <DetailLabel>Detail</DetailLabel>
              </DetailTab>
            </SideRail>
          </Main>
          <StatusBar>
            <StatusPath>
              Local Database Servers / NextGen Servers / SQL Server / MS SQL SERVER 2012 / Management / Current Activity / Locks...
            </StatusPath>
            <MemoryBox>
              <MemUsed />
              <MemAlloc />
              <MemText>112 : 222 : 2,513 MB</MemText>
              <TrashSlot><Trash /></TrashSlot>
            </MemoryBox>
          </StatusBar>
        </Shell>
      </Page>
    </>
  );
}
